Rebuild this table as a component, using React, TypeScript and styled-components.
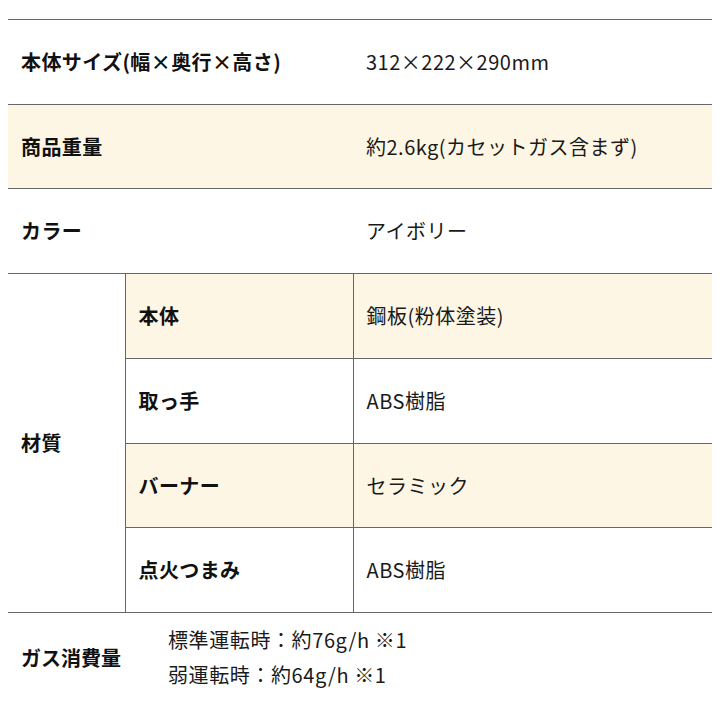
import React from "react";
import styled, { createGlobalStyle } from "styled-components";

const GlobalStyle = createGlobalStyle`
  body {
    margin: 8px;
    background: #fff;
    font-family: "Noto Sans CJK JP", "Noto Sans", sans-serif;
    color: #1a1a1a;
  }
`;

const SpecTable = styled.table`
  width: 100%;
  table-layout: fixed;
  border-collapse: collapse;
  margin-top: 11px;
  font-size: 20px;
  line-height: 33.7px;
`;

const Col = styled.col<{ $w?: number }>`
  width: ${(p) => (p.$w ? `${p.$w}px` : "auto")};
`;

const Row = styled.tr<{ $cream?: boolean }>`
  background: ${(p) => (p.$cream ? "#fdf6e4" : "#fff")};
`;

const Label = styled.th<{ $sub?: boolean; $group?: boolean }>`
  text-align: left;
  font-weight: 700;
  color: #111;
  padding: 25px 13px;
  border-top: 1px solid #666;
  border-bottom: 1px solid #666;
  vertical-align: middle;
  letter-spacing: 0.4px;
  white-space: nowrap;
  background: ${(p) => (p.$group ? "#fff" : "inherit")};
  ${(p) => (p.$sub ? "border-left: 1px solid #666;" : "")}
`;

const Value = styled.td<{ $sub?: boolean }>`
  padding: 25px 13px;
  border-top: 1px solid #666;
  border-bottom: 1px solid #666;
  vertical-align: middle;
  font-weight: 400;
  color: #1a1a1a;
  letter-spacing: 0.5px;
  ${(p) => (p.$sub ? "border-left: 1px solid #666;" : "")}
`;

const GasLabel = styled.th`
  text-align: left;
  font-weight: 700;
  color: #111;
  padding: 10px 0 10px 13px;
  border-top: 1px solid #666;
  vertical-align: middle;
  white-space: nowrap;
`;

const GasValue = styled.td`
  padding: 9px 13px 10px 43px;
  border-top: 1px solid #666;
  line-height: 35px;
  color: #1a1a1a;
  letter-spacing: 0.6px;
`;

const GasLine = styled.div``;

const plain: [string, string][] = [
  ["本体サイズ(幅×奥行×高さ)", "312×222×290mm"],
  ["商品重量", "約2.6kg(カセットガス含まず)"],
  ["カラー", "アイボリー"],
];

const materials: [string, string][] = [
  ["本体", "鋼板(粉体塗装)"],
  ["取っ手", "ABS樹脂"],
  ["バーナー", "セラミック"],
  ["点火つまみ", "ABS樹脂"],
];

export default function App() {
  return (
    <>
      <GlobalStyle />
      <SpecTable>
        <colgroup>
          <Col $w={117} />
          <Col $w={228} />
          <Col />
        </colgroup>
        <tbody>
          {plain.map(([k, v], i) => (
            <Row key={k} $cream={i % 2 === 1}>
              <Label colSpan={2}>{k}</Label>
              <Value>{v}</Value>
            </Row>
          ))}
          {materials.map(([k, v], i) => (
            <Row key={k} $cream={i % 2 === 0}>
              {i === 0 && (
                <Label $group rowSpan={materials.length}>
                  材質
                </Label>
              )}
              <Label $sub>{k}</Label>
              <Value $sub>{v}</Value>
            </Row>
          ))}
          <Row>
            <GasLabel>ガス消費量</GasLabel>
            <GasValue colSpan={2}>
              <GasLine>標準運転時：約76g/h ※1</GasLine>
              <GasLine>弱運転時：約64g/h ※1</GasLine>
            </GasValue>
          </Row>
        </tbody>
      </SpecTable>
    </>
  );
}
